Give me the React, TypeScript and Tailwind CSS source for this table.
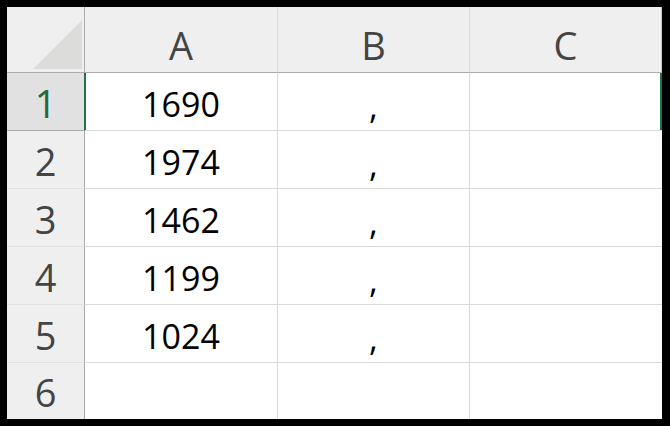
import React from "react";

const rows = [
  { n: "1", a: "1690", b: "," },
  { n: "2", a: "1974", b: "," },
  { n: "3", a: "1462", b: "," },
  { n: "4", a: "1199", b: "," },
  { n: "5", a: "1024", b: "," },
  { n: "6", a: "", b: "" },
];

export default function App() {
  return (
    <div className="w-[670px] h-[426px] bg-black pt-[7px] pl-[7px] font-['Open_Sans','Noto_Sans',sans-serif]">
      <div className="w-[655px] h-[412px] bg-white grid grid-cols-[78px_193px_192px_192px] grid-rows-[66px_58px_58px_58px_58px_58px_56px] overflow-hidden">
        {/* header row */}
        <div className="bg-[#efefef] border-r border-b border-[#ababab] relative">
          <svg className="absolute left-[26px] top-[13px]" width="50" height="50" viewBox="0 0 50 50">
            <polygon points="49,0 49,49 0,49" fill="#dcdcdb" />
          </svg>
        </div>
        {["A", "B", "C"].map((l, i) => (
          <div
            key={l}
            className={`bg-[#efefef] border-b border-[#ababab] flex items-center justify-center pt-[11px] text-[38px] text-[#444444] leading-none ${
              i < 2 ? "border-r border-r-[#dadada]" : "border-r border-r-[#c8c8c8]"
            }`}
          >
            {l}
          </div>
        ))}

        {rows.map((r, idx) => {
          const sel = idx === 0;
          const last = idx === rows.length - 1;
          return (
            <React.Fragment key={r.n}>
              <div
                className={`flex items-center justify-center pt-[2px] text-[38px] leading-none border-r ${
                  sel
                    ? "bg-[#e1e1e1] text-[#1e6b41] border-r-[#217346] border-b border-b-[#ababab]"
                    : "bg-[#efefef] text-[#444444] border-r-[#ababab]"
                } ${!sel && !last ? "border-b border-b-[#e0e0e0]" : ""}`}
              >
                {r.n}
              </div>
              <div
                className={`flex items-center justify-center pt-[4px] text-[34px] leading-none text-black border-r border-[#dadada] ${
                  last ? "" : "border-b"
                } ${sel ? "shadow-[inset_1px_0_0_#217346]" : ""}`}
              >
                {r.a}
              </div>
              <div
                className={`flex items-center justify-center pt-[8px] text-[34px] leading-none text-black border-r border-[#dadada] ${
                  last ? "" : "border-b"
                }`}
              >
                {r.b}
              </div>
              <div
                className={`border-[#dadada] ${last ? "" : "border-b"} ${
                  sel ? "shadow-[inset_-2px_0_0_#217346]" : ""
                }`}
              />
            </React.Fragment>
          );
        })}
      </div>
    </div>
  );
}
